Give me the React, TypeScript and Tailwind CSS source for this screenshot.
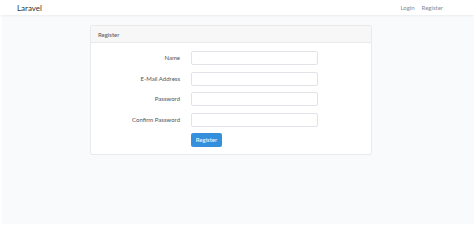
export default function App() {
  const rows = ["Name", "E-Mail Address", "Password", "Confirm Password"];
  return (
    <div className="w-[474px] h-[227px] bg-white overflow-hidden" style={{ fontFamily: "Lato, 'Noto Sans', sans-serif" }}>
      <nav className="h-[15px] bg-white flex items-center justify-between pl-[17px] pr-[31px] shadow-[0_1px_2px_rgba(0,0,0,0.06)] relative z-10">
        <span className="text-[8px] leading-none text-[#2f3337]">Laravel</span>
        <div className="flex gap-[7px] text-[6px] leading-none text-[#8a8d90]">
          <span>Login</span>
          <span>Register</span>
        </div>
      </nav>
      <main className="ml-[2px] h-[209px] bg-[#f8fafc] pt-[10px]">
        <div className="ml-[88px] w-[282px] bg-white border border-[#e8eaec] rounded-[2px] text-[#50555a]">
          <div className="h-[17px] bg-[#f7f7f7] border-b border-[#e8eaec] flex items-center px-[7px] text-[6px]">Register</div>
          <div className="pt-[8px] pb-[7px] flex flex-col gap-[6.5px]">
            {rows.map((r) => (
              <div key={r} className="flex items-center h-[14px]">
                <label className="w-[89px] text-right text-[6px] leading-none">{r}</label>
                <div className="ml-[11px] w-[127px] h-[14px] border border-[#e0e4e8] rounded-[2px] bg-white" />
              </div>
            ))}
            <div className="flex h-[14px]">
              <button className="ml-[100px] w-[31px] h-[14px] rounded-[2px] bg-[#3490dc] text-white text-[6px] leading-none">Register</button>
            </div>
          </div>
        </div>
      </main>
    </div>
  );
}
